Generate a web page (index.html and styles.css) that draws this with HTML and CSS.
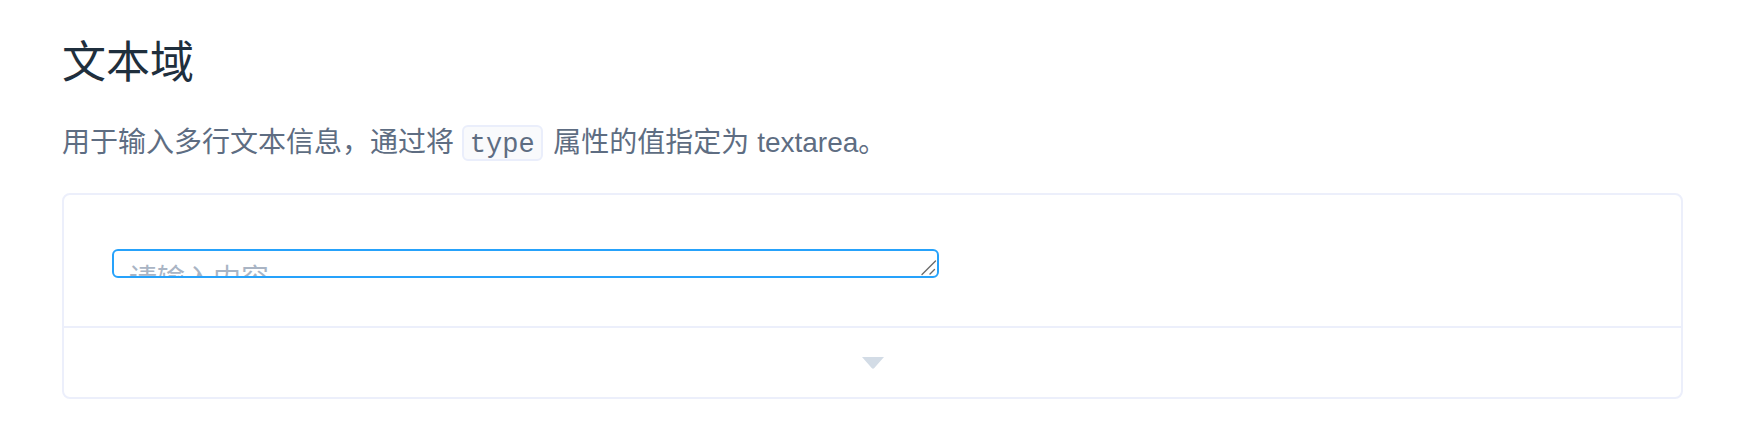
FILE: index.html
```html
<!DOCTYPE html>
<html lang="zh-CN">
<head>
<meta charset="utf-8">
<title>文本域</title>
<link rel="stylesheet" href="styles.css">
</head>
<body>
<div class="page">
  <h3 class="title">文本域</h3>
  <p class="desc">用于输入多行文本信息，通过将 <code class="code">type</code> 属性的值指定为 textarea。</p>
  <div class="demo">
    <div class="source">
      <div class="field">
        <textarea class="textarea" rows="2" placeholder="请输入内容"></textarea>
        <svg class="grip" width="16" height="16" viewBox="0 0 16 16" aria-hidden="true">
          <path d="M14.5 1 L1 14.5 M13.5 9.5 L9 14" stroke="#6b6b6b" stroke-width="1.4" stroke-linecap="round" fill="none"/>
        </svg>
      </div>
    </div>
    <div class="control">
      <svg class="caret" width="22" height="12" viewBox="0 0 22 12" aria-hidden="true">
        <path d="M0 0 H22 L12.3 10.9 Q11 12.4 9.7 10.9 Z" fill="#d3dce6"/>
      </svg>
    </div>
  </div>
</div>
</body>
</html>
```

FILE: styles.css
```css
html, body {
  margin: 0;
  padding: 0;
  background: #ffffff;
}

body {
  font-family: "Liberation Sans", "Noto Sans CJK SC", sans-serif;
}

.page {
  padding: 41px 77px 0 62px;
}

.title {
  margin: 0;
  font-size: 44px;
  line-height: 44px;
  font-weight: 400;
  color: #1f2f3d;
}

.desc {
  margin: 40px 0 0;
  font-size: 28px;
  line-height: 36px;
  color: #5e6d82;
}

.code {
  display: inline-block;
  vertical-align: top;
  box-sizing: border-box;
  height: 36px;
  padding: 0 6px;
  margin-right: 3px;
  border: 2px solid #eaeefb;
  border-radius: 6px;
  background: #f9fafc;
  font-family: "Liberation Mono", monospace;
  font-size: 27px;
  line-height: 37px;
  color: #5e6d82;
}

.demo {
  margin-top: 32px;
  border: 2px solid #eceffb;
  border-radius: 8px;
  background: #ffffff;
}

.source {
  padding: 54px 48px 48px;
}

.field {
  position: relative;
  width: 827px;
}

.textarea {
  display: block;
  box-sizing: border-box;
  width: 827px;
  height: 29px;
  margin: 0;
  padding: 8px 15px 0;
  border: 2px solid #26a2fb;
  border-radius: 6px;
  outline: none;
  resize: none;
  font-family: "Liberation Sans", "Noto Sans CJK SC", sans-serif;
  font-size: 28px;
  line-height: 42px;
  color: #1f2d3d;
  background: #ffffff;
  overflow: hidden;
}

.textarea::placeholder {
  color: #a9b4c4;
}

.grip {
  position: absolute;
  right: 2px;
  bottom: 2px;
  display: block;
}

.control {
  box-sizing: border-box;
  height: 71px;
  border-top: 2px solid #eceffb;
  display: flex;
  align-items: center;
  justify-content: center;
}

.caret {
  display: block;
}
```
